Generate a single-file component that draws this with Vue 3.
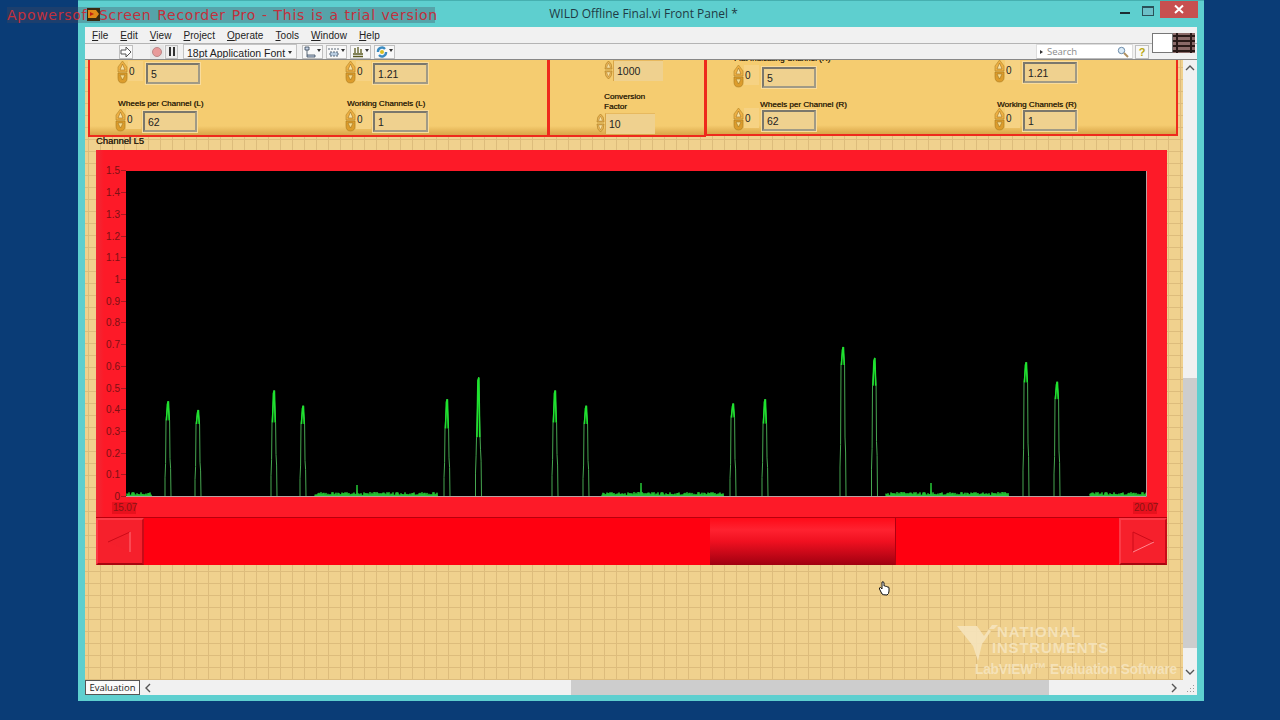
<template>
  <div class="desktop">
    <div class="window">
      <div class="titlebar">
        <span class="title">WILD Offline Final.vi Front Panel *</span>
        <div class="win-btns">
          <span class="win-min"></span>
          <span class="win-max"></span>
          <svg class="win-close" width="38" height="17" viewBox="0 0 38 17">
            <path d="M15 4.5 L23 12 M23 4.5 L15 12" stroke="#fff" stroke-width="2" />
          </svg>
        </div>
      </div>

      <div class="menubar">
        <span v-for="m in menus" :key="m" class="menu-item"><u>{{ m[0] }}</u>{{ m.slice(1) }}</span>
      </div>

      <div class="toolbar">
        <button class="tb-btn run">
          <svg width="12" height="12" viewBox="0 0 12 12">
            <path d="M1 4 H6 V1 L11 6 L6 11 V8 H1 Z" fill="#fff" stroke="#555" />
          </svg>
        </button>
        <button class="tb-btn rec"><span class="rec-dot"></span></button>
        <button class="tb-btn pause">
          <svg width="8" height="9" viewBox="0 0 8 9"><path d="M1 0 H3 V9 H1 Z M5 0 H7 V9 H5 Z" fill="#333" /></svg>
        </button>
        <div class="font-select">
          <span>18pt Application Font</span>
          <span class="font-arrow"></span>
        </div>
        <button v-for="t in toolIcons" :key="t" class="tb-btn tool">
          <svg width="12" height="12" viewBox="0 0 12 12">
            <path v-if="t === 'align'" d="M1 1 H5 V4 H1 Z M3 4 V9 M3 9 H11 V11 H3 Z" fill="#c8d4e8" stroke="#345" stroke-width=".8" />
            <path v-if="t === 'dist'" d="M0 3 H12 M2 6 H10 V10 H2 Z" fill="#b8cce0" stroke="#345" stroke-width=".8" stroke-dasharray="2 1" />
            <path v-if="t === 'size'" d="M1 10.5 H11 M1 8 H11 M3 2 V7 M6 1 V7 M9 3 V7" fill="none" stroke="#5a5a20" stroke-width="1.3" />
            <path v-if="t === 'order'" d="M2 6 A4 4 0 0 1 9 3 M10 6 A4 4 0 0 1 3 9" fill="none" stroke="#3a8ac0" stroke-width="2.4" />
            <circle v-if="t === 'order'" cx="6" cy="6" r="2" fill="#d8c020" />
          </svg>
          <span class="mini-arrow"></span>
        </button>
        <div class="tb-spacer"></div>
        <div class="search">
          <span class="search-arrow"></span>
          <span class="search-text">Search</span>
          <svg width="12" height="12" viewBox="0 0 12 12">
            <circle cx="4.5" cy="4.5" r="3.2" fill="#dcecf8" stroke="#6a8aa8" />
            <path d="M7 7 L11 11" stroke="#b09060" stroke-width="2" />
          </svg>
        </div>
        <button class="tb-btn help">?</button>
      </div>

      <div class="workarea">
        <div class="canvas">
          <div class="panels">
            <section class="panel panel-left">
              <div v-for="c in leftControls" :key="c.label + c.value" class="ctl-cell" :class="c.cls">
                <label v-if="c.label">{{ c.label }}</label>
                <div class="ctl">
                  <svg class="spin" width="11" height="23" viewBox="0 0 11 23">
                    <path d="M5.5 0 L10 6 V11 H1 V6 Z" fill="#eeb044" stroke="#b08428" stroke-width=".6" />
                    <path d="M5.5 3 L8 9 H3 Z" fill="#f8e2a4" stroke="#a07020" stroke-width=".6" />
                    <path d="M1 12 H10 V17 Q10 22 5.5 22 Q1 22 1 17 Z" fill="#dc9c2c" stroke="#a97a20" stroke-width=".6" />
                    <path d="M3 14 H8 L5.5 19 Z" fill="#f8dc90" stroke="#906a18" stroke-width=".5" />
                  </svg>
                  <span class="radix">0</span>
                  <span class="value">{{ c.value }}</span>
                </div>
              </div>
            </section>

            <section class="panel panel-mid">
              <div class="ctl ctl-plain ctl-first">
                <svg class="spin thin" width="9" height="20" viewBox="0 0 9 20">
                  <path d="M4.5 1 Q8 3 8 9 H1 Q1 3 4.5 1 Z M1 11 H8 Q8 17 4.5 19 Q1 17 1 11 Z" fill="#eab658" stroke="#a97a20" stroke-width=".6" />
                  <path d="M4.5 3 L6.5 8 H2.5 Z M2.5 12 H6.5 L4.5 17 Z" fill="#f8e2a4" stroke="#a07020" stroke-width=".4" />
                </svg>
                <span class="value">1000</span>
              </div>
              <label class="conv-label">Conversion<br />Factor</label>
              <div class="ctl ctl-plain ctl-second">
                <svg class="spin thin" width="9" height="20" viewBox="0 0 9 20">
                  <path d="M4.5 1 Q8 3 8 9 H1 Q1 3 4.5 1 Z M1 11 H8 Q8 17 4.5 19 Q1 17 1 11 Z" fill="#eab658" stroke="#a97a20" stroke-width=".6" />
                  <path d="M4.5 3 L6.5 8 H2.5 Z M2.5 12 H6.5 L4.5 17 Z" fill="#f8e2a4" stroke="#a07020" stroke-width=".4" />
                </svg>
                <span class="value">10</span>
              </div>
            </section>

            <section class="panel panel-right">
              <div v-for="c in rightControls" :key="c.label + c.value" class="ctl-cell" :class="c.cls">
                <label v-if="c.label">{{ c.label }}</label>
                <div class="ctl">
                  <svg class="spin" width="11" height="23" viewBox="0 0 11 23">
                    <path d="M5.5 0 L10 6 V11 H1 V6 Z" fill="#eeb044" stroke="#b08428" stroke-width=".6" />
                    <path d="M5.5 3 L8 9 H3 Z" fill="#f8e2a4" stroke="#a07020" stroke-width=".6" />
                    <path d="M1 12 H10 V17 Q10 22 5.5 22 Q1 22 1 17 Z" fill="#dc9c2c" stroke="#a97a20" stroke-width=".6" />
                    <path d="M3 14 H8 L5.5 19 Z" fill="#f8dc90" stroke="#906a18" stroke-width=".5" />
                  </svg>
                  <span class="radix">0</span>
                  <span class="value">{{ c.value }}</span>
                </div>
              </div>
            </section>
          </div>

          <div class="chart-label">Channel L5</div>
          <div class="chart">
            <div class="y-axis">
              <div v-for="t in yTicks" :key="t" class="y-tick"><span>{{ t }}</span><i></i></div>
            </div>
            <svg class="plot" width="1021" height="326" viewBox="0 0 1021 326">
              <rect width="1021" height="326" fill="#000" />
              <path :d="noisePath" fill="none" stroke="#25c635" stroke-width="1" />
              <path :d="dimPath" fill="none" stroke="#46a650" stroke-width="1" />
              <path :d="brightPath" fill="none" stroke="#1fe22f" stroke-width="1.6" />
              <path d="M0 325.5 H1020.5 V0" fill="none" stroke="#b9a0a0" stroke-width="1" />
            </svg>
            <div class="x-axis">
              <span>15.07</span>
              <span>20.07</span>
            </div>
            <div class="scroller">
              <button class="scroll-btn">
                <svg width="26" height="26" viewBox="0 0 26 26">
                  <path d="M1 13 L23 3 V23 Z" fill="#f4202c" />
                  <path d="M1 13 L23 3" stroke="#cc0a18" />
                  <path d="M23 3 V23" stroke="#ff7078" />
                </svg>
              </button>
              <div class="scroll-track"><div class="scroll-thumb"></div></div>
              <button class="scroll-btn">
                <svg width="26" height="26" viewBox="0 0 26 26">
                  <path d="M24 13 L3 3 V23 Z" fill="#f4202c" />
                  <path d="M3 3 V23 M3 3 L24 13" stroke="#cc0a18" />
                  <path d="M3 23 L24 13" stroke="#ff8890" />
                </svg>
              </button>
            </div>
          </div>

          <div class="watermark">
            <svg class="ni-logo" width="42" height="40" viewBox="0 0 42 40">
              <path d="M0 2 H20 L27 12 L35 1 H41 L37 5 H31 L34 7 L28 16 L25 20 L21 37 L16 22 Z" fill="#f6e4bd" />
            </svg>
            <span class="wm-national">NATIONAL</span>
            <span class="wm-instruments">INSTRUMENTS</span>
            <span class="wm-labview">LabVIEW™ Evaluation Software</span>
          </div>

          <svg class="hand" width="12" height="15" viewBox="0 0 12 15">
            <path d="M4 1 V8 L2.5 6.5 Q1 6.5 1.5 8 L4 13 Q5 14 9 14 Q11 13 11 10 V6.5 Q10 5.5 9 6 Q8.5 5 7.5 5.3 Q7 4.5 6 5 V1.5 Q5 .3 4 1 Z" fill="#fff" stroke="#111" stroke-width="1" />
          </svg>
        </div>

        <div class="vscroll">
          <svg class="chev" width="10" height="6" viewBox="0 0 10 6"><path d="M1 5 L5 1 L9 5" fill="none" stroke="#555" stroke-width="1.4" /></svg>
          <div class="vtrack"><div class="vthumb"></div></div>
          <svg class="chev" width="10" height="6" viewBox="0 0 10 6"><path d="M1 1 L5 5 L9 1" fill="none" stroke="#555" stroke-width="1.4" /></svg>
        </div>
      </div>

      <div class="hbar">
        <span class="eval-tab">Evaluation</span>
        <svg class="chev h-left" width="6" height="10" viewBox="0 0 6 10"><path d="M5 1 L1 5 L5 9" fill="none" stroke="#555" stroke-width="1.4" /></svg>
        <div class="htrack"><div class="hthumb"></div></div>
        <svg class="chev h-right" width="6" height="10" viewBox="0 0 6 10"><path d="M1 1 L5 5 L1 9" fill="none" stroke="#555" stroke-width="1.4" /></svg>
        <svg class="grip" width="10" height="10" viewBox="0 0 10 10">
          <path d="M8 1 h1 v1 h-1 Z M5 4 h1 v1 h-1 Z M8 4 h1 v1 h-1 Z M2 7 h1 v1 h-1 Z M5 7 h1 v1 h-1 Z M8 7 h1 v1 h-1 Z" fill="#999" />
        </svg>
      </div>
    </div>

    <!-- recorder watermark and the VI icon float over everything -->
    <div class="trial">Apowersoft Screen Recorder Pro - This is a trial version</div>
    <svg class="vi-icon" width="13" height="13" viewBox="0 0 13 13">
      <rect width="13" height="13" fill="#3a2a10" />
      <path d="M1 2 H9 L12 6 L9 10 H1 Z" fill="#e08a18" />
      <path d="M3 4 L7 6 L3 8 Z" fill="#c02010" />
    </svg>
    <div class="vi-panes">
      <div class="pane-white"></div>
      <svg width="22" height="20" viewBox="0 0 22 20">
        <rect width="22" height="20" fill="#8a6a68" />
        <path d="M0 3 H22 M0 8 H22 M0 13 H22 M0 18 H22 M4 0 V20 M18 0 V20" stroke="#2a1a18" stroke-width="2" />
      </svg>
    </div>
  </div>
</template>

<script setup>
const menus = ['File', 'Edit', 'View', 'Project', 'Operate', 'Tools', 'Window', 'Help']
const toolIcons = ['align', 'dist', 'size', 'order']

const leftControls = [
  { label: '', value: '5', cls: 'a1' },
  { label: '', value: '1.21', cls: 'b1' },
  { label: 'Wheels per Channel (L)', value: '62', cls: 'a2' },
  { label: 'Working Channels (L)', value: '1', cls: 'b2' }
]

const rightControls = [
  { label: 'Flat Indicating Channel (R)', value: '5', cls: 'r1' },
  { label: '', value: '1.21', cls: 's1' },
  { label: 'Wheels per Channel (R)', value: '62', cls: 'r2' },
  { label: 'Working Channels (R)', value: '1', cls: 's2' }
]

const yTicks = ['1.5', '1.4', '1.3', '1.2', '1.1', '1', '0.9', '0.8', '0.7', '0.6', '0.5', '0.4', '0.3', '0.2', '0.1', '0']

// screen x of each wheel peak, minus plot left (126), with its height in volts
const peaks = [
  { x: 42, v: 0.44, b: 0.2 },
  { x: 72, v: 0.4, b: 0.16 },
  { x: 148, v: 0.49, b: 0.3 },
  { x: 177, v: 0.42, b: 0.2 },
  { x: 321, v: 0.45, b: 0.3 },
  { x: 352.5, v: 0.55, b: 0.5 },
  { x: 429, v: 0.49, b: 0.3 },
  { x: 460, v: 0.42, b: 0.2 },
  { x: 607, v: 0.43, b: 0.15 },
  { x: 639, v: 0.45, b: 0.25 },
  { x: 717, v: 0.69, b: 0.12 },
  { x: 748.5, v: 0.64, b: 0.2 },
  { x: 900, v: 0.62, b: 0.15 },
  { x: 931, v: 0.53, b: 0.15 }
]

const scaleY = 326 / 1.5
let dim = ''
let bright = ''
peaks.forEach((p) => {
  const top = 326 - p.v * scaleY
  const h = 326 - top
  const lo = top + h * p.b
  dim += `M${p.x - 3} 326 L${p.x - 3} ${top + h * 0.8} L${p.x - 2.4} ${top + h * 0.65} L${p.x - 2} ${lo} L${p.x} ${top} L${p.x + 1.6} ${lo} L${p.x + 2} ${top + h * 0.6} L${p.x + 2.6} ${top + h * 0.7} L${p.x + 3} 326 `
  bright += `M${p.x - 1.5} ${lo} L${p.x - 0.6} ${top + 3} L${p.x + 0.4} ${top} L${p.x + 1.2} ${lo} `
})
const dimPath = dim
const brightPath = bright

// baseline chatter between the wheel groups, from a small fixed sequence
const noiseRuns = [
  [1, 26], [189, 312], [476, 598], [760, 883], [964, 1021]
]
const spikes = { 231: 11, 515: 13, 805: 13 }
let seed = 7
const nextNoise = () => {
  seed = (seed * 73 + 41) % 101
  return seed / 101
}
let noise = ''
noiseRuns.forEach(([from, to]) => {
  noise += `M${from} 325 `
  for (let x = from; x < to; x += 1) {
    const up = spikes[x] || 1 + nextNoise() * 3
    noise += `L${x} ${325 - up} L${x + 0.5} 325 `
  }
})
const noisePath = noise
</script>

<style>
html,
body {
  margin: 0;
  overflow: hidden;
}
</style>

<style scoped>
.desktop {
  position: relative;
  width: 1280px;
  height: 720px;
  background: #0a3c76;
  overflow: hidden;
  font-family: "Open Sans", "Liberation Sans", sans-serif;
}

.window {
  box-sizing: border-box;
  width: 1126px;
  height: 701px;
  margin-left: 78px;
  padding: 0 7px 6px;
  background: #5ecfcf;
  border-top: 1px solid #46b0b0;
  display: flex;
  flex-direction: column;
}

/* title bar */
.titlebar {
  height: 26px;
  position: relative;
  display: flex;
  justify-content: center;
  flex: none;
}

.title {
  font-size: 12px;
  line-height: 26px;
  color: #1f3a44;
  padding-left: 5px;
}

.win-btns {
  position: absolute;
  right: -1px;
  top: 0;
  display: flex;
  align-items: flex-start;
}

.win-min {
  width: 10px;
  height: 2px;
  margin: 11px 12px 0 0;
  background: #1d2d33;
}

.win-max {
  width: 10px;
  height: 7px;
  margin: 5px 6px 0 0;
  border: 1px solid #2a5058;
  border-top-width: 2px;
  background: #6cc0c8;
}

.win-close {
  background: #c75050;
  display: block;
}

/* menu */
.menubar {
  box-sizing: border-box;
  height: 17px;
  flex: none;
  background: #f1f1f1;
  border-bottom: 1px solid #b4b4b4;
  display: flex;
  align-items: center;
  gap: 12px;
  padding-left: 7px;
  font: 10px "Liberation Sans", sans-serif;
  letter-spacing: 0.05px;
  color: #222;
}

.toolbar {
  box-sizing: border-box;
  height: 16px;
  flex: none;
  background: #f1f1f1;
  border-bottom: 1px solid #888;
  display: flex;
  align-items: center;
  padding-left: 34px;
  padding-right: 48px;
}

.tb-btn {
  height: 14px;
  padding: 0;
  border: 1px solid #c0c0c0;
  background: #f8f8f8;
  display: flex;
  align-items: center;
  justify-content: center;
  box-sizing: border-box;
}

.run {
  width: 14px;
  margin-right: 17px;
}

.rec {
  width: 14px;
  border: none;
  background: #e6e6e6;
}

.rec-dot {
  width: 8px;
  height: 8px;
  border-radius: 50%;
  background: #e89a9a;
  border: 1px solid #b88;
}

.pause {
  width: 13px;
  margin: 0 0 0 1px;
  background: #eee;
}

.font-select {
  width: 114px;
  height: 15px;
  margin-left: 5px;
  margin-right: 5px;
  box-sizing: border-box;
  border: 1px solid #c4c4c4;
  background: #f7f7f7;
  display: flex;
  align-items: center;
  justify-content: space-between;
  padding: 3px 4px 0 3px;
  font: 10.5px "Liberation Sans", sans-serif;
  color: #222;
  white-space: nowrap;
  overflow: hidden;
}

.font-arrow,
.mini-arrow {
  width: 0;
  height: 0;
  border-left: 2.5px solid transparent;
  border-right: 2.5px solid transparent;
  border-top: 3px solid #333;
  margin-bottom: 2px;
}

.tool {
  width: 21px;
  margin-right: 3px;
  gap: 1px;
}

.tb-spacer {
  flex: 1;
}

.search {
  width: 97px;
  height: 15px;
  box-sizing: border-box;
  background: #fff;
  border: 1px solid #ddd;
  border-bottom-color: #bbb;
  display: flex;
  align-items: center;
  padding-right: 3px;
  font-size: 9.5px;
  color: #8a8a8a;
}

.search-arrow {
  width: 0;
  height: 0;
  margin: 0 3px;
  border-top: 2px solid transparent;
  border-bottom: 2px solid transparent;
  border-left: 3px solid #333;
}

.search-text {
  flex: 1;
  padding-left: 1px;
}

.help {
  width: 14px;
  margin-left: 2px;
  font: bold 11px "Liberation Sans", sans-serif;
  color: #b8a810;
}

/* work area */
.workarea {
  flex: 1;
  min-height: 0;
  display: flex;
}

.canvas {
  position: relative;
  width: 1098px;
  overflow: hidden;
  background-color: #f0d18e;
  background-image:
    linear-gradient(#ddbc7c 1px, transparent 1px),
    linear-gradient(90deg, #ddbc7c 1px, transparent 1px);
  background-size: 12px 12px;
  background-position: 3px 7px;
}

.panels {
  display: flex;
  height: 77px;
  margin-left: 3px;
}

.panel {
  box-sizing: border-box;
  height: 77px;
  position: relative;
  background: linear-gradient(#f5cc70 0, #f5cc70 88%, #d9a548 100%);
  border: 2px solid #ee2a1c;
  border-top: none;
  overflow: hidden;
}

.panel-left {
  width: 461px;
  display: grid;
  grid-template-columns: 228px 1fr;
  grid-template-rows: 38px 1fr;
  padding: 1px 0 0 25px;
}

.panel-mid {
  width: 158px;
  margin-left: -1px;
  padding: 0 0 0 46px;
  display: flex;
  flex-direction: column;
  align-items: flex-start;
}

.panel-right {
  width: 473px;
  margin-left: -1px;
  height: 76px;
  display: grid;
  grid-template-columns: 262px 1fr;
  grid-template-rows: 38px 1fr;
  padding: 0 0 0 25px;
}

.ctl-cell {
  display: flex;
  flex-direction: column;
  align-items: flex-start;
  gap: 1px;
}

.ctl-cell label {
  height: 12px;
  margin-left: 3px;
}

label {
  font: 8.1px/10px "Liberation Sans", sans-serif;
  color: #35280c;
  text-shadow: 0.3px 0 0 #35280c;
  white-space: nowrap;
}

.a2,
.b2 {
  align-self: end;
  padding-bottom: 4px;
}

.r2,
.s2 {
  align-self: end;
  padding-bottom: 5px;
}

.a2 .ctl,
.b2 .ctl,
.r2 .ctl,
.s2 .ctl {
  margin-top: -3px;
}

.r2 label,
.s2 label {
  line-height: 13px;
}

.a1 {
  margin-left: 2px;
}

.b1,
.b2 {
  margin-left: 2px;
}

.a2 .value {
  margin-left: 2px;
}

.b1 .value,
.b2 .value {
  margin-left: 2px;
  width: 55px;
}

.a2 label {
  margin-left: 3px;
}

.b2 label {
  margin-left: 2px;
}

.r1 {
  margin-top: -4px;
}

.r1 .ctl,
.r2 .ctl {
  margin-left: 1px;
}

.r1 label {
  margin-left: 2px;
  height: 8px;
  line-height: 6px;
}

.r2 label {
  margin-left: 28px;
}

.ctl {
  display: flex;
  align-items: flex-start;
}

.spin {
  flex: none;
  display: block;
}

.radix {
  width: 15px;
  height: 20px;
  background: #f6d283;
  font: 10px/22px "Liberation Sans", sans-serif;
  color: #222;
  padding-left: 1px;
  box-sizing: border-box;
}

.value {
  display: block;
  box-sizing: border-box;
  width: 54px;
  height: 21px;
  margin: 2px 0 0 3px;
  padding-left: 3px;
  background: #efd18f;
  border: 2px solid #a09a86;
  border-top-color: #7a776c;
  border-left-color: #7a776c;
  outline: 1px solid #f9dc9c;
  font: 10.5px/19px "Liberation Sans", sans-serif;
  color: #222;
}

.ctl-first {
  margin-top: 0;
  margin-left: 8px;
}

.ctl-plain .value {
  width: 50px;
  height: 21px;
  margin: 0;
  border: none;
  border-top: 1px solid #e7b95f;
  border-left: 1px solid #d9a548;
  outline: none;
  padding-left: 3px;
  line-height: 20px;
}

.conv-label {
  margin-top: 11px;
  line-height: 10px;
  margin-left: 8px;
}

.ctl-second {
  margin-top: 1px;
}

/* chart */
.chart-label {
  height: 13px;
  margin-left: 11px;
  font: 9.4px/8px "Liberation Sans", sans-serif;
  text-shadow: 0.3px 0 0 #2c2410;
  color: #2c2410;
}

.chart {
  width: 1071px;
  height: 415px;
  margin-left: 11px;
  background: linear-gradient(90deg, #ee2a36 0, #fd1a28 8px);
  display: grid;
  grid-template-columns: 30px 1021px 20px;
  grid-template-rows: 21px 326px 20px 48px;
}

.y-axis {
  grid-column: 1;
  grid-row: 2;
  margin-top: -11px;
  display: flex;
  flex-direction: column;
}

.y-tick {
  height: 21.73px;
  flex: none;
  display: flex;
  align-items: center;
  justify-content: flex-end;
  font: 10px "Liberation Sans", sans-serif;
  color: #7c1014;
}

.y-tick i {
  width: 5px;
  height: 1px;
  margin-left: 1px;
  background: #a81820;
}

.plot {
  grid-column: 2;
  grid-row: 2;
  display: block;
}

.x-axis {
  grid-column: 1 / 4;
  grid-row: 3;
  display: flex;
  justify-content: space-between;
  align-items: flex-start;
  padding: 5px 10px 0 16px;
  font: 10px/12px "Liberation Sans", sans-serif;
  color: #8a1414;
}

.x-axis span {
  background: #e8111d;
  padding: 0 1px;
  width: 22px;
  letter-spacing: -0.2px;
}

.scroller {
  grid-column: 1 / 4;
  grid-row: 4;
  display: flex;
  background: #ff0010;
  border-top: 1px solid #b8000c;
  box-sizing: border-box;
}

.scroll-btn {
  width: 48px;
  padding: 0;
  flex: none;
  background: #f6202c;
  border: 2px solid;
  border-color: #fb3a46 #c80c18 #a8060f #fb3a46;
  display: flex;
  align-items: center;
  justify-content: center;
}

.scroll-track {
  flex: 1;
  padding-left: 566px;
}

.scroll-thumb {
  width: 186px;
  height: 100%;
  background: linear-gradient(#ff0a18 0, #ff2230 25%, #f01020 50%, #a00010 100%);
  border-right: 1px solid #b00010;
  box-sizing: border-box;
}

/* NI evaluation watermark */
.watermark {
  position: absolute;
  left: 872px;
  top: 564px;
  width: 225px;
  height: 56px;
  color: #f6e4bd;
  opacity: 0.9;
  font-family: "Liberation Sans", sans-serif;
  font-weight: bold;
  white-space: nowrap;
}

.ni-logo {
  position: absolute;
  left: 0;
  top: 0;
}

.wm-national,
.wm-instruments,
.wm-labview {
  position: absolute;
  line-height: 1;
}

.wm-national {
  left: 40px;
  top: 0;
  font-size: 15px;
  letter-spacing: 1px;
}

.wm-instruments {
  left: 35px;
  top: 16px;
  font-size: 15px;
  letter-spacing: 0.8px;
}

.wm-labview {
  left: 18px;
  top: 37px;
  font-size: 15.5px;
  letter-spacing: -0.2px;
  transform: scaleX(0.88);
  transform-origin: left center;
}

.hand {
  position: absolute;
  left: 793px;
  top: 521px;
}

/* scrollbars */
.vscroll {
  width: 14px;
  background: #f1f1f1;
  display: flex;
  flex-direction: column;
  align-items: center;
}

.chev {
  flex: none;
  display: block;
}

.vscroll .chev:first-child {
  margin-top: 5px;
}

.vscroll .chev:last-child {
  margin-bottom: 5px;
}

.vtrack {
  flex: 1;
  width: 100%;
  padding-top: 307px;
  padding-bottom: 21px;
  box-sizing: border-box;
}

.vthumb {
  height: 100%;
  background: #cdcdcd;
}

.hbar {
  height: 15px;
  flex: none;
  background: #f1f1f1;
  display: flex;
  align-items: center;
}

.eval-tab {
  width: 55px;
  height: 15px;
  box-sizing: border-box;
  border: 1px solid #555;
  background: #fafafa;
  font-size: 9.5px;
  line-height: 13px;
  text-align: center;
  color: #222;
}

.h-left {
  margin-left: 5px;
}

.htrack {
  flex: 1;
  height: 100%;
  padding-left: 420px;
  padding-right: 122px;
  box-sizing: border-box;
}

.hthumb {
  height: 100%;
  background: #cdcdcd;
}

.grip {
  margin: 2px 2px 0 8px;
  flex: none;
}

/* overlays */
.trial {
  position: absolute;
  left: 7px;
  top: 7px;
  width: 428px;
  height: 16px;
  background: rgba(70, 70, 90, 0.32);
  font: 14px/16px "DejaVu Sans", sans-serif;
  letter-spacing: 0.72px;
  word-spacing: 0.7px;
  color: #c2303c;
  white-space: nowrap;
}

.vi-icon {
  position: absolute;
  left: 87px;
  top: 8px;
}

.vi-panes {
  position: absolute;
  left: 1152px;
  top: 33px;
  display: flex;
}

.pane-white {
  width: 21px;
  height: 20px;
  background: #fff;
  border: 1px solid #777;
  box-sizing: border-box;
}
</style>
